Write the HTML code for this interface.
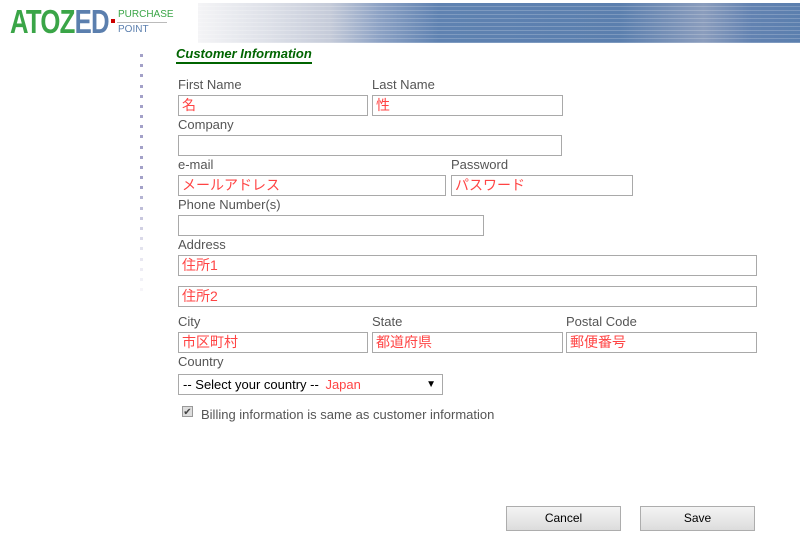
<!DOCTYPE html>
<html><head><meta charset="utf-8"><style>
body{margin:0;width:800px;height:556px;background:#fff;position:relative;overflow:hidden;font-family:"Liberation Sans","Noto Sans CJK JP",sans-serif;}
.a{position:absolute}
.lbl{position:absolute;font-size:13px;color:#555;}
.in{position:absolute;border:1px solid #a9a9a9;box-sizing:border-box;height:21px;color:#f44;font-size:14px;line-height:19px;padding-left:3px;font-family:"Liberation Sans","Noto Sans CJK JP",sans-serif;}
.btn{position:absolute;width:115px;height:25px;border:1px solid #adadad;box-sizing:border-box;background:linear-gradient(#f4f4f4,#dcdcdc);font-size:12px;text-align:center;line-height:23px;color:#000}
.dot{position:absolute;left:140px;width:3px;height:3px;background:#a3a1c8;}
</style></head><body>
<div class="a" style="left:10px;top:3px;font-size:33px;font-weight:bold;letter-spacing:-1px;transform:scaleX(0.78);transform-origin:left;"><span style="color:#3aa547">ATOZ</span><span style="color:#5b7fae">ED</span></div>
<div class="a" style="left:111px;top:19px;width:4px;height:4px;background:#c00"></div>
<div class="a" style="left:118px;top:9px;font-size:10px;color:#3aa547;line-height:12px">PURCHASE</div>
<div class="a" style="left:117px;top:22px;width:50px;height:1px;background:#bbb"></div>
<div class="a" style="left:118px;top:24px;font-size:10px;color:#5b7fae;line-height:12px">POINT</div>
<div class="a" style="left:198px;top:3px;width:602px;height:40px;background:linear-gradient(90deg,#f4f4f6 0%,#dde0e8 12%,#c5cbd9 22%,#8ea3c5 30%,#5f82b1 40%,#5b7fae 70%,#8b9dbd 84%,#6282b1 92%,#5b7fae 100%)"></div>
<div class="a" style="left:198px;top:3px;width:602px;height:40px;background:repeating-linear-gradient(180deg,rgba(255,255,255,0) 0 3px,rgba(255,255,255,.2) 3px 4px)"></div>
<div class="a" style="left:176px;top:46px;font-size:13px;font-weight:bold;font-style:italic;color:#006400;border-bottom:2px solid #006400;padding-bottom:1px">Customer Information</div>
<div class="dot" style="top:54px"></div><div class="dot" style="top:64px"></div><div class="dot" style="top:74px"></div><div class="dot" style="top:85px"></div><div class="dot" style="top:95px"></div><div class="dot" style="top:105px"></div><div class="dot" style="top:115px"></div><div class="dot" style="top:125px"></div><div class="dot" style="top:135px"></div><div class="dot" style="top:146px"></div><div class="dot" style="top:156px"></div><div class="dot" style="top:166px"></div><div class="dot" style="top:176px"></div><div class="dot" style="top:186px"></div><div class="dot" style="top:196px;opacity:.8"></div><div class="dot" style="top:207px;opacity:.7"></div><div class="dot" style="top:217px;opacity:.6"></div><div class="dot" style="top:227px;opacity:.5"></div><div class="dot" style="top:237px;opacity:.4"></div><div class="dot" style="top:247px;opacity:.3"></div><div class="dot" style="top:258px;opacity:.25"></div><div class="dot" style="top:268px;opacity:.2"></div><div class="dot" style="top:278px;opacity:.15"></div><div class="dot" style="top:288px;opacity:.1"></div>
<div class="lbl" style="left:178px;top:77px">First Name</div><div class="lbl" style="left:372px;top:77px">Last Name</div>
<div class="in" style="left:178px;top:95px;width:190px">名</div><div class="in" style="left:372px;top:95px;width:191px">性</div>
<div class="lbl" style="left:178px;top:117px">Company</div>
<div class="in" style="left:178px;top:135px;width:384px"></div>
<div class="lbl" style="left:178px;top:157px">e-mail</div><div class="lbl" style="left:451px;top:157px">Password</div>
<div class="in" style="left:178px;top:175px;width:268px">メールアドレス</div><div class="in" style="left:451px;top:175px;width:182px">パスワード</div>
<div class="lbl" style="left:178px;top:197px">Phone Number(s)</div>
<div class="in" style="left:178px;top:215px;width:306px"></div>
<div class="lbl" style="left:178px;top:237px">Address</div>
<div class="in" style="left:178px;top:255px;width:579px">住所1</div>
<div class="in" style="left:178px;top:286px;width:579px">住所2</div>
<div class="lbl" style="left:178px;top:314px">City</div><div class="lbl" style="left:372px;top:314px">State</div><div class="lbl" style="left:566px;top:314px">Postal Code</div>
<div class="in" style="left:178px;top:332px;width:190px">市区町村</div><div class="in" style="left:372px;top:332px;width:191px">都道府県</div><div class="in" style="left:566px;top:332px;width:191px">郵便番号</div>
<div class="lbl" style="left:178px;top:354px">Country</div>
<div class="in" style="left:178px;top:374px;width:265px;color:#000;font-size:13px;padding-left:4px">-- Select your country -- <span style="color:#f44;margin-left:3px">Japan</span><span style="position:absolute;right:6px;top:0;font-size:10px">▼</span></div>
<div class="a" style="left:182px;top:406px;width:11px;height:11px;border:1px solid #999;background:#ddd;font-size:10px;line-height:11px;text-align:center;color:#444;box-sizing:border-box">✔</div>
<div class="lbl" style="left:201px;top:407px">Billing information is same as customer information</div>
<div class="btn" style="left:506px;top:506px">Cancel</div>
<div class="btn" style="left:640px;top:506px">Save</div>
</body></html>
